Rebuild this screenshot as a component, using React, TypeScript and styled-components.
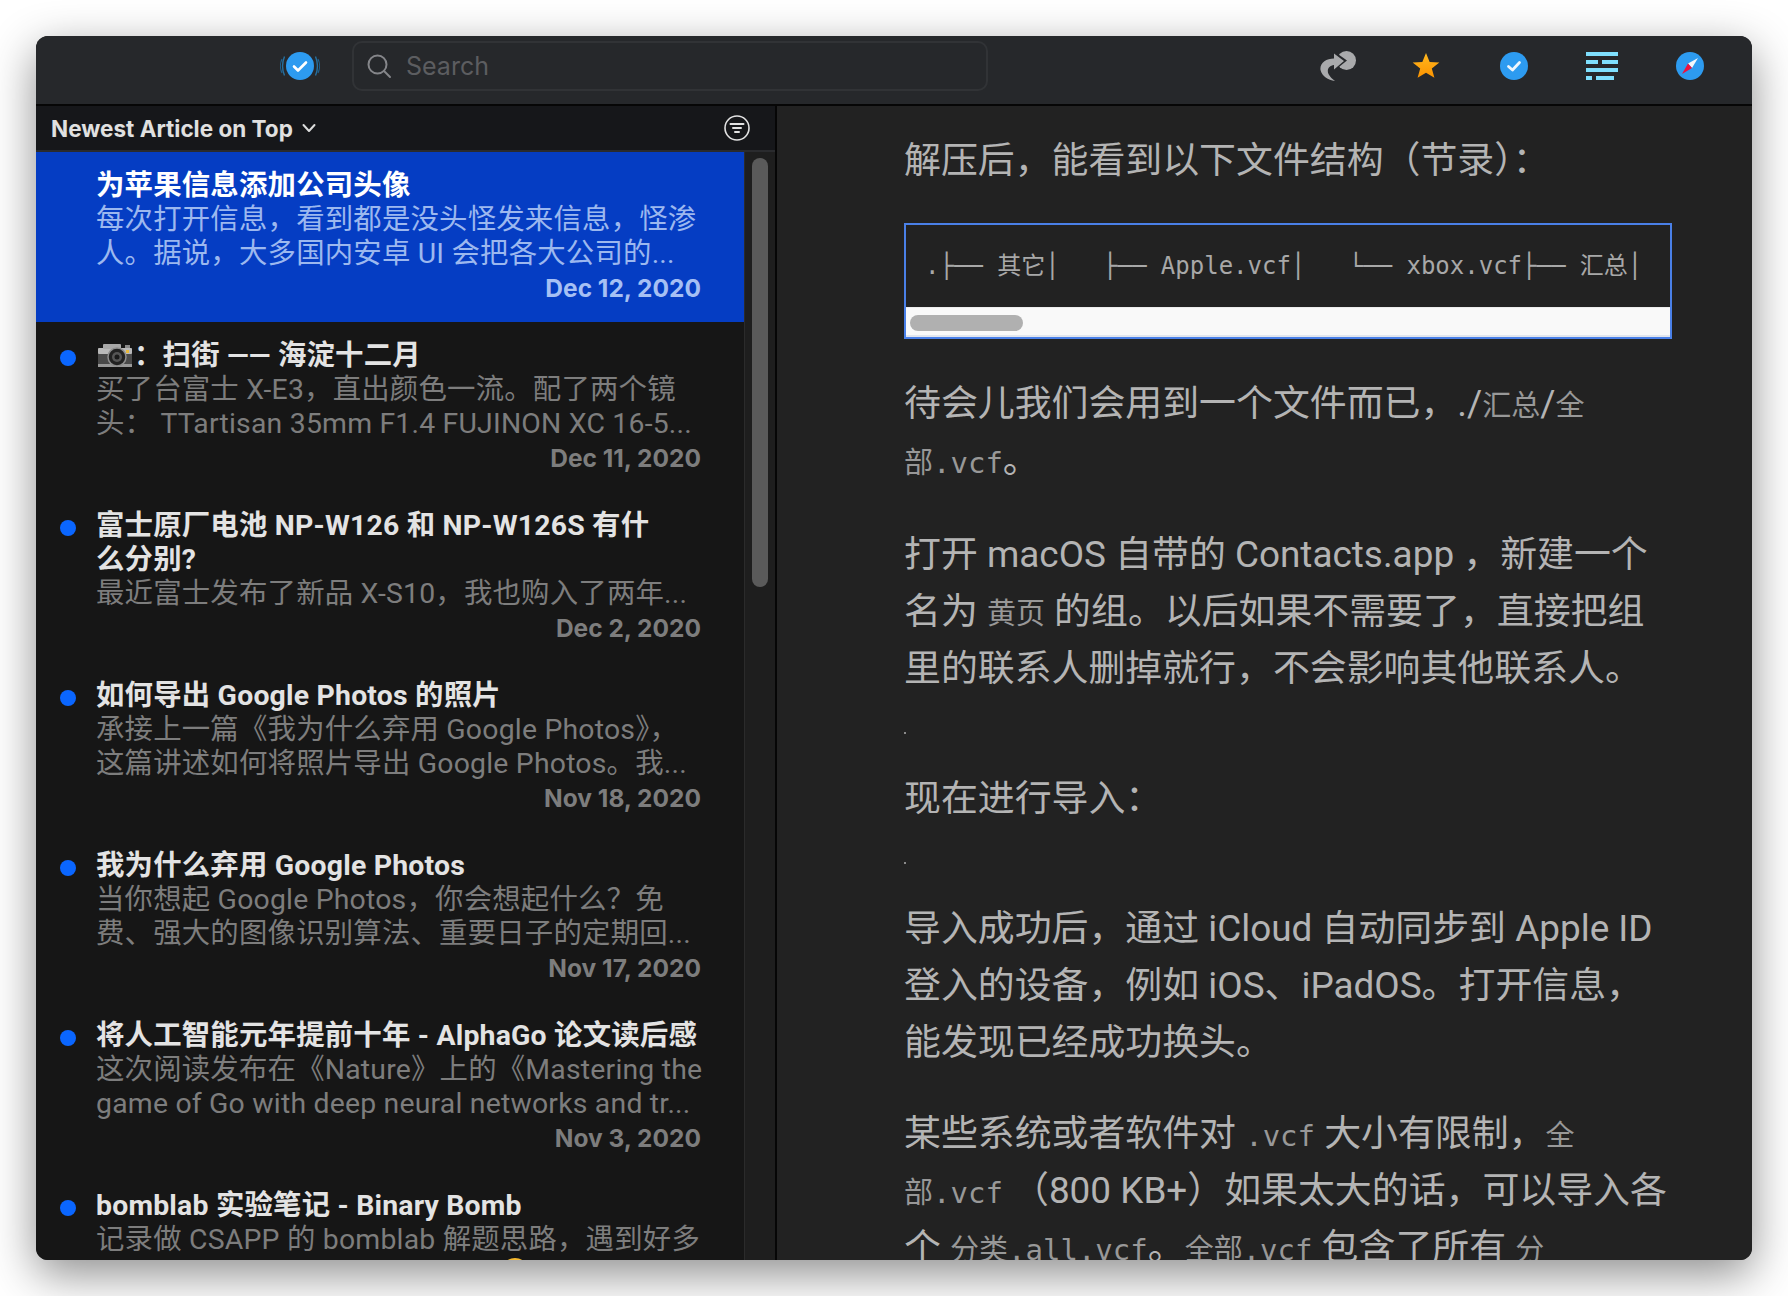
import React from "react";
import styled, { createGlobalStyle } from "styled-components";

const sans = `Inter, "Noto Sans CJK SC", sans-serif`;
const prose = `Roboto, "Noto Sans CJK SC", sans-serif`;
const mono = `"DejaVu Sans Mono", "Noto Sans CJK SC", monospace`;

type Article = {
  title: React.ReactNode[];
  excerpt: React.ReactNode[];
  date: string;
};

const GlobalStyle = createGlobalStyle`
  html, body {
    margin: 0;
    padding: 0;
    background: #ffffff;
  }
  body {
    font-family: ${sans};
  }
`;

const Page = styled.div`
  width: 1788px;
  height: 1296px;
  padding: 36px;
  box-sizing: border-box;
  overflow: hidden;
`;

const Window = styled.div`
  width: 1716px;
  height: 1224px;
  display: flex;
  flex-direction: column;
  border-radius: 12px;
  overflow: hidden;
  background: #222222;
  box-shadow: 0 14px 46px rgba(0, 0, 0, 0.45);
`;

const Toolbar = styled.div`
  flex: none;
  height: 70px;
  box-sizing: border-box;
  display: flex;
  align-items: center;
  padding: 0 18px 8px 244px;
  background: #26282b;
  border-bottom: 2px solid #060606;
`;

const RefreshIcon = styled.svg`
  flex: none;
`;

const SearchBox = styled.div`
  width: 636px;
  height: 50px;
  box-sizing: border-box;
  margin-left: 32px;
  display: flex;
  align-items: center;
  gap: 14px;
  padding-left: 12px;
  border: 2px solid #313336;
  border-radius: 10px;
`;

const SearchText = styled.span`
  font-size: 25px;
  color: #5c5d60;
`;

const ToolIcons = styled.div`
  margin-left: auto;
  display: flex;
`;

const ToolIcon = styled.div`
  width: 88px;
  height: 60px;
  display: flex;
  align-items: center;
  justify-content: center;
`;

const Body = styled.div`
  flex: 1;
  min-height: 0;
  display: flex;
`;

const Sidebar = styled.div`
  flex: none;
  width: 739px;
  display: flex;
  flex-direction: column;
  background: #161616;
  border-right: 2px solid #060606;
`;

const ListHeader = styled.div`
  flex: none;
  height: 44px;
  display: flex;
  align-items: center;
  justify-content: space-between;
  padding: 0 25px 0 15px;
  background: #16171a;
  border-bottom: 2px solid #2a2b2e;
`;

const SortLabel = styled.div`
  display: flex;
  align-items: center;
  gap: 9px;
  font-size: 22.5px;
  font-weight: 700;
  color: #e0e0e0;
`;

const ListArea = styled.div`
  flex: 1;
  min-height: 0;
  display: flex;
`;

const ArticleList = styled.div`
  flex: none;
  width: 708px;
`;

const ArticleRow = styled.div<{ $selected: boolean }>`
  height: 170px;
  box-sizing: border-box;
  padding: 17px 0 0 24px;
  display: flex;
  align-items: flex-start;
  background: ${({ $selected }) => ($selected ? "#053dc3" : "transparent")};
`;

const UnreadDot = styled.span<{ $visible: boolean }>`
  flex: none;
  width: 16px;
  height: 16px;
  margin: 11px 20px 0 0;
  border-radius: 50%;
  background: ${({ $visible }) => ($visible ? "#0a66ff" : "transparent")};
`;

const ArticleText = styled.div`
  flex: none;
  width: 607px;
`;

const ArticleTitle = styled.div<{ $selected: boolean }>`
  height: 34px;
  line-height: 34px;
  font-family: ${prose};
  font-size: 28.4px;
  letter-spacing: 0.2px;
  font-weight: 700;
  white-space: nowrap;
  color: ${({ $selected }) => ($selected ? "#ffffff" : "#e3e3e3")};
`;

const ArticleExcerpt = styled.div<{ $selected: boolean }>`
  height: 34px;
  line-height: 34px;
  font-family: ${prose};
  font-size: 28.4px;
  letter-spacing: 0.2px;
  white-space: nowrap;
  color: ${({ $selected }) => ($selected ? "#9cb8ef" : "#7d7d7d")};
`;

const ArticleDate = styled.div<{ $selected: boolean }>`
  height: 34px;
  line-height: 34px;
  font-size: 24.5px;
  font-weight: 700;
  text-align: right;
  white-space: nowrap;
  margin-right: 2px;
  color: ${({ $selected }) => ($selected ? "#a6c0f4" : "#7d7d7d")};
`;

const CameraSvg = styled.svg`
  vertical-align: -2px;
  margin: 0 2px;
`;

const PeekEmoji = styled.span`
  display: inline-block;
  vertical-align: top;
  width: 28px;
  height: 28px;
  margin: 1px 0 0 405px;
  border-radius: 50%;
  background: #f6b92e;
`;

const ScrollTrack = styled.div`
  flex: none;
  width: 31px;
  box-sizing: border-box;
  padding: 6px 7px 0;
  background: #1e1e1e;
  border-left: 1px solid #2b2b2b;
`;

const ScrollThumb = styled.div`
  height: 429px;
  width: 16px;
  border-radius: 8px;
  background: #5a5a5a;
`;

const Reader = styled.div`
  flex: 1;
  min-width: 0;
  box-sizing: border-box;
  padding: 26px 0 0 127px;
  overflow: hidden;
  background: #222222;
  font-family: ${prose};
  font-size: 36.9px;
  color: #b4b4b4;
`;

const Para = styled.div<{ $tail?: number }>`
  margin: 0 0 ${({ $tail }) => $tail ?? 34}px;
  line-height: 57px;
  white-space: nowrap;
`;

const Line = styled.div`
  height: 57px;
  line-height: 57px;
  white-space: nowrap;
`;

const Code = styled.code`
  font-family: ${mono};
  font-size: 29px;
  color: #989898;
`;

const CodeBlock = styled.div`
  width: 768px;
  height: 116px;
  box-sizing: border-box;
  margin: 5px 0 35.5px;
  display: flex;
  flex-direction: column;
  border: 2px solid #4a80e8;
  background: #222222;
`;

const CodeScroll = styled.pre`
  flex: 1;
  margin: 0;
  padding: 0 0 0 19px;
  line-height: 82px;
  font-family: ${mono};
  font-size: 24px;
  white-space: pre;
  overflow: hidden;
  color: #a8a8a8;
`;

const ScrollStrip = styled.div`
  flex: none;
  height: 30px;
  box-sizing: border-box;
  padding: 7px 4px 0;
  background: #f9f9f9;
  border-top: 1px solid #ededed;
  border-bottom: 2px solid #e2e6ee;
`;

const StripThumb = styled.div`
  width: 113px;
  height: 16px;
  border-radius: 8px;
  background: #b0b0b0;
`;

const Speck = styled.div`
  width: 2px;
  height: 6px;
  margin: -3px 0 36px;
  border-bottom: 2px solid #8a8a8a;
  box-sizing: border-box;
`;

const CameraEmoji = () => (
  <CameraSvg viewBox="0 0 34 24" width={34} height={24}>
    <rect x="0" y="5" width="34" height="19" rx="2" fill="#4a4a4a" />
    <rect x="0" y="5" width="34" height="6" rx="1" fill="#b9b9b9" />
    <rect x="5" y="1" width="18" height="5" rx="1" fill="#a8a8a8" />
    <rect x="27" y="2" width="5" height="3" fill="#8a8a8a" />
    <rect x="0" y="21" width="34" height="3" fill="#999" />
    <circle cx="19" cy="14" r="9" fill="#222" stroke="#8d8d8d" strokeWidth="1.5" />
    <circle cx="19" cy="14" r="5" fill="#555" />
    <circle cx="19" cy="14" r="2.5" fill="#1a1a1a" />
    <rect x="28" y="7" width="3" height="3" fill="#e8b93a" />
  </CameraSvg>
);

const articles: Article[] = [
  {
    title: ["为苹果信息添加公司头像"],
    excerpt: ["每次打开信息，看到都是没头怪发来信息，怪渗", "人。据说，大多国内安卓 UI 会把各大公司的..."],
    date: "Dec 12, 2020",
  },
  {
    title: [
      <React.Fragment key="t">
        <CameraEmoji />：扫街 —— 海淀十二月
      </React.Fragment>,
    ],
    excerpt: ["买了台富士 X-E3，直出颜色一流。配了两个镜", "头：  TTartisan 35mm F1.4 FUJINON XC 16-5..."],
    date: "Dec 11, 2020",
  },
  {
    title: ["富士原厂电池 NP-W126 和 NP-W126S 有什", "么分别?"],
    excerpt: ["最近富士发布了新品 X-S10，我也购入了两年..."],
    date: "Dec 2, 2020",
  },
  {
    title: ["如何导出 Google Photos 的照片"],
    excerpt: ["承接上一篇《我为什么弃用 Google Photos》，", "这篇讲述如何将照片导出 Google Photos。我..."],
    date: "Nov 18, 2020",
  },
  {
    title: ["我为什么弃用 Google Photos"],
    excerpt: ["当你想起 Google Photos，你会想起什么？免", "费、强大的图像识别算法、重要日子的定期回..."],
    date: "Nov 17, 2020",
  },
  {
    title: ["将人工智能元年提前十年 - AlphaGo 论文读后感"],
    excerpt: ["这次阅读发布在《Nature》上的《Mastering the", "game of Go with deep neural networks and tr..."],
    date: "Nov 3, 2020",
  },
  {
    title: ["bomblab 实验笔记 - Binary Bomb"],
    excerpt: ["记录做 CSAPP 的 bomblab 解题思路，遇到好多", <PeekEmoji key="e" />],
    date: "Oct 30, 2020",
  },
];

const App = () => {
  return (
    <>
      <GlobalStyle />
      <Page>
        <Window>
          <Toolbar>
            <RefreshIcon viewBox="0 0 40 28" width={40} height={28}>
              <path d="M2 7c-2 4-2 10 0 14M38 7c2 4 2 10 0 14" stroke="#1f5f8c" strokeWidth="1.2" fill="none" />
              <path d="M4.500 4.500c-2.500 6-2.500 13 0 19M35.500 4.500c2.500 6 2.500 13 0 19" stroke="#26709f" strokeWidth="1.4" fill="none" />
              <circle cx="20" cy="14" r="14" fill="#2d9bf0" />
              <path d="M14 14.500l4 4 8-8" stroke="#fff" strokeWidth="2.6" fill="none" strokeLinecap="round" strokeLinejoin="round" />
            </RefreshIcon>
            <SearchBox>
              <svg viewBox="0 0 26 26" width={26} height={26} fill="none" stroke="#85868a" strokeWidth="2">
                <circle cx="11.500" cy="11.500" r="9" />
                <path d="M18 18l6 6" strokeLinecap="round" />
              </svg>
              <SearchText>Search</SearchText>
            </SearchBox>
            <ToolIcons>
              <ToolIcon>
                <svg viewBox="0 0 36 30" width={36} height={30}>
                  <circle cx="26.500" cy="9.500" r="9.500" fill="#a9aaac" />
                  <path d="M15 1l12 8.500-10 8-3.500-3 5.500-5-7-5z" fill="#26282b" />
                  <path d="M14 2.500l10 7.500-10 8.500V14c-5 .5-7.500 4.500-5.500 9 1.500 3 4 5 6.500 7-7-1-13-4.500-14.500-11C-.5 12 6 7.500 14 7.500z" fill="#a9aaac" />
                </svg>
              </ToolIcon>
              <ToolIcon>
                <svg viewBox="0 0 26 26" width={28} height={28}>
                  <defs>
                    <linearGradient id="star" x1="0" y1="0" x2="0" y2="1">
                      <stop offset="0" stopColor="#ffb81f" />
                      <stop offset="1" stopColor="#fb9300" />
                    </linearGradient>
                  </defs>
                  <path
                    d="M13 1l3.400 8.300 9 .5-7 5.600 2.400 8.600L13 19.200 5.200 24l2.400-8.600-7-5.600 9-.5z"
                    fill="url(#star)"
                  />
                </svg>
              </ToolIcon>
              <ToolIcon>
                <svg viewBox="0 0 28 28" width={28} height={28}>
                  <circle cx="14" cy="14" r="14" fill="#2d9bf0" />
                  <path d="M8.500 14.500l4 3.500 7-7.500" stroke="#eef6fd" strokeWidth="2.800" fill="none" strokeLinecap="round" strokeLinejoin="round" />
                </svg>
              </ToolIcon>
              <ToolIcon>
                <svg viewBox="0 0 32 28" width={32} height={28} fill="#7fdffd">
                  <rect x="0" y="0" width="32" height="4" />
                  <rect x="0" y="8" width="12" height="4" />
                  <rect x="16" y="8" width="16" height="4" />
                  <rect x="0" y="16" width="32" height="4" />
                  <rect x="0" y="24" width="6" height="4" />
                  <rect x="10" y="24" width="18" height="4" />
                </svg>
              </ToolIcon>
              <ToolIcon>
                <svg viewBox="0 0 28 28" width={28} height={28}>
                  <circle cx="14" cy="14" r="14" fill="#2d9bf0" />
                  <path d="M22 6l-10 5.500 4 4.500z" fill="#f4f7fb" />
                  <path d="M6 22l6-10.500 4 4.500z" fill="#f0103c" />
                </svg>
              </ToolIcon>
            </ToolIcons>
          </Toolbar>
          <Body>
            <Sidebar>
              <ListHeader>
                <SortLabel>
                  Newest Article on Top
                  <svg viewBox="0 0 14 10" width={14} height={10} fill="none" stroke="#dcdcdc" strokeWidth="2">
                    <path d="M1.500 2l5.500 6 5.500-6" strokeLinecap="round" strokeLinejoin="round" />
                  </svg>
                </SortLabel>
                <svg viewBox="0 0 26 26" width={26} height={26} fill="none" stroke="#e2e2e2" strokeWidth="1.600">
                  <circle cx="13" cy="13" r="12" />
                  <path d="M6.500 9h13M9 13h8M11 17h4" strokeWidth="2" strokeLinecap="round" />
                </svg>
              </ListHeader>
              <ListArea>
                <ArticleList>
                  {articles.map((article, index) => (
                    <ArticleRow key={article.date} $selected={index === 0}>
                      <UnreadDot $visible={index !== 0} />
                      <ArticleText>
                        {article.title.map((line, i) => (
                          <ArticleTitle key={i} $selected={index === 0}>
                            {line}
                          </ArticleTitle>
                        ))}
                        {article.excerpt.map((line, i) => (
                          <ArticleExcerpt key={i} $selected={index === 0}>
                            {line}
                          </ArticleExcerpt>
                        ))}
                        <ArticleDate $selected={index === 0}>{article.date}</ArticleDate>
                      </ArticleText>
                    </ArticleRow>
                  ))}
                </ArticleList>
                <ScrollTrack>
                  <ScrollThumb />
                </ScrollTrack>
              </ListArea>
            </Sidebar>
            <Reader>
              <Para>解压后，能看到以下文件结构（节录）：</Para>
              <CodeBlock>
                <CodeScroll>{".├── 其它│   ├── Apple.vcf│   └── xbox.vcf├── 汇总│"}</CodeScroll>
                <ScrollStrip>
                  <StripThumb />
                </ScrollStrip>
              </CodeBlock>
              <Para $tail={37.5}>
                <Line>
                  待会儿我们会用到一个文件而已，./<Code>汇总</Code>/<Code>全</Code>
                </Line>
                <Line>
                  <Code>部.vcf</Code>。
                </Line>
              </Para>
              <Para>
                <Line>打开 macOS 自带的 Contacts.app ，新建一个</Line>
                <Line>
                  名为 <Code>黄页</Code> 的组。以后如果不需要了，直接把组
                </Line>
                <Line>里的联系人删掉就行，不会影响其他联系人。</Line>
              </Para>
              <Speck />
              <Para>现在进行导入：</Para>
              <Speck />
              <Para>
                <Line>导入成功后，通过 iCloud 自动同步到 Apple ID</Line>
                <Line>登入的设备，例如 iOS、iPadOS。打开信息，</Line>
                <Line>能发现已经成功换头。</Line>
              </Para>
              <Para>
                <Line>
                  某些系统或者软件对 <Code>.vcf</Code> 大小有限制，<Code>全</Code>
                </Line>
                <Line>
                  <Code>部.vcf</Code> （800 KB+）如果太大的话，可以导入各
                </Line>
                <Line>
                  个 <Code>分类.all.vcf</Code>。<Code>全部.vcf</Code> 包含了所有 <Code>分</Code>
                </Line>
              </Para>
            </Reader>
          </Body>
        </Window>
      </Page>
    </>
  );
};

export default App;
